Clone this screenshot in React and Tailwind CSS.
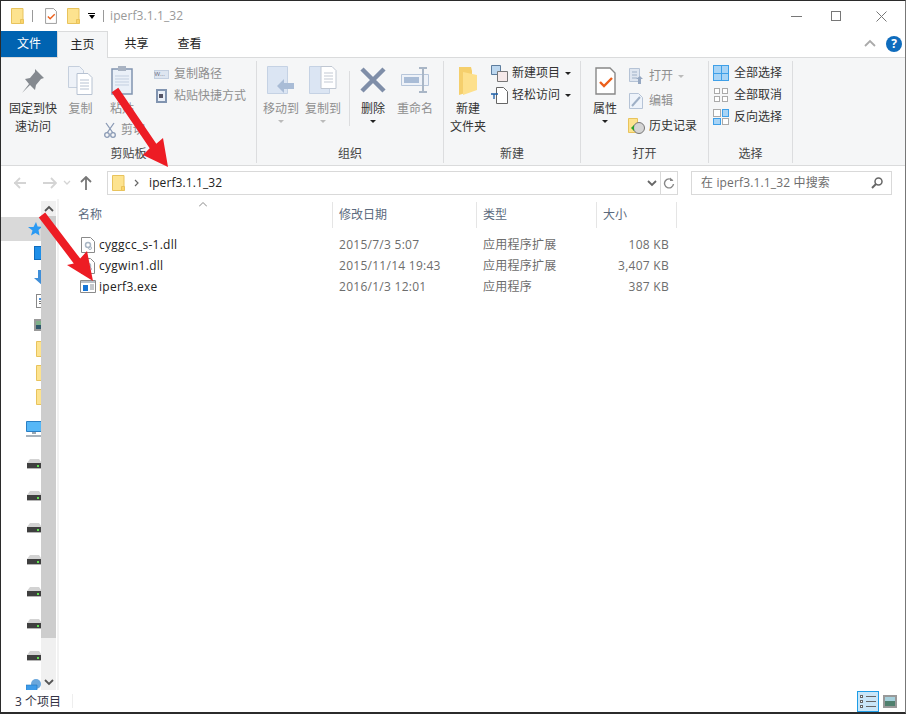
import React from "react"

const FONT = "font-['Open_Sans','Noto_Sans_CJK_SC',sans-serif]"

const Folder = ({ className = "" }) => (
  <svg viewBox="0 0 13 16" width="13" height="16" className={`shrink-0 ${className}`}>
    <path d="M.5.5h11.500v15H.5z" fill="#fde38f" stroke="#e8c35c" />
    <path d="M9.500 11.500h3v4h-3z" fill="#fbd46a" stroke="#e8c35c" />
  </svg>
)

const PropsIcon = ({ w = 14, h = 16 }) => (
  <svg viewBox="0 0 21 28" width={w} height={h}>
    <path d="M1 1h14l5 5v21H1z" fill="#fff" stroke="#888" strokeWidth="1.400" />
    <path d="M5 15l4 4 8-8" fill="none" stroke="#ec5f1a" strokeWidth="2.400" />
  </svg>
)

const Drive = () => (
  <svg viewBox="0 0 15 10" width="15" height="10">
    <path d="M3 0h9l3 4H0z" fill="#d3d3d3" />
    <path d="M0 4h15v5H0z" fill="#3f3f3f" />
    <path d="M0 9h15v1H0z" fill="#b5b5b5" />
    <path d="M10 6h2v2h-2z" fill="#5fe04f" />
  </svg>
)

const NavIcon = ({ type }) => {
  if (type === "star") return <svg viewBox="0 0 14 14" width="14" height="14" className="ml-[27px] shrink-0"><path d="M8 0l1.600 4.400L14 5l-3.500 3 1 5.500-4-2.500L3 13.500l1.500-5L0 5l5.500 0z" fill="#2b9af3" /></svg>
  if (type === "blue") return <div className="ml-[33px] w-[12px] h-[14px] shrink-0 bg-[#1f8fe8] border border-[#0f6cbd]" />
  if (type === "down") return <svg viewBox="0 0 16 15" width="16" height="15" className="ml-[33px] shrink-0"><path d="M4 0h5v8h7l-8 7-8-7h4z" fill="#3f8ed8" /></svg>
  if (type === "doc") return <div className="ml-[35px] w-[12px] h-[14px] shrink-0 bg-white border border-[#888]"><div className="mt-[3px] ml-[2px] w-[8px] h-[2px] bg-[#4a90d9]" /><div className="mt-[1px] ml-[2px] w-[8px] h-px bg-[#777]" /><div className="mt-[1px] ml-[2px] w-[8px] h-px bg-[#777]" /></div>
  if (type === "img") return <div className="ml-[33px] w-[14px] h-[12px] shrink-0 bg-white border-2 border-[#999] overflow-hidden"><div className="w-full h-1/2 bg-[#7fb08a]" /><div className="w-full h-1/2 bg-[#30586b]" /></div>
  if (type === "folder") return <Folder className="ml-[35px]" />
  if (type === "pc") return (
    <svg viewBox="0 0 16 16" width="16" height="16" className="ml-[25px] shrink-0">
      <path d="M.5.500h15v10H.5z" fill="#56b7f7" stroke="#2a7fc4" />
      <path d="M6 11h4v2H6z" fill="#9aa8b3" />
      <path d="M0 14h16v2H0z" fill="#a7b2bc" />
    </svg>
  )
  if (type === "drive") return <div className="ml-[26px] shrink-0"><Drive /></div>
  return (
    <svg viewBox="0 0 16 14" width="16" height="14" className="ml-[25px] shrink-0">
      <circle cx="10" cy="5" r="5" fill="#6aa7dc" />
      <path d="M0 6h11v8H0z" fill="#3d9be9" stroke="#2277bd" strokeWidth=".6" />
    </svg>
  )
}

const navRows = [
  ["star", 23], ["blue", 25], ["down", 24], ["doc", 23], ["img", 25], ["folder", 24], ["folder", 24], ["folder", 24],
  ["pc", 39], ["drive", 32], ["drive", 32], ["drive", 32], ["drive", 32], ["drive", 32], ["drive", 32], ["drive", 32], ["net", 27],
]

const files = [
  { name: "cyggcc_s-1.dll", date: "2015/7/3 5:07", type: "应用程序扩展", size: "108 KB", exe: false },
  { name: "cygwin1.dll", date: "2015/11/14 19:43", type: "应用程序扩展", size: "3,407 KB", exe: false },
  { name: "iperf3.exe", date: "2016/1/3 12:01", type: "应用程序", size: "387 KB", exe: true },
]

const DllIcon = () => (
  <svg viewBox="0 0 14 16" width="14" height="16">
    <path d="M.5.500h9l4 4v11H.5z" fill="#fff" stroke="#8a8a8a" />
    <circle cx="7" cy="8" r="2.500" fill="none" stroke="#a9b6c4" strokeWidth="1.500" />
    <circle cx="9" cy="11" r="1.500" fill="none" stroke="#a9b6c4" />
  </svg>
)

const ExeIcon = () => (
  <svg viewBox="0 0 16 13" width="16" height="13">
    <path d="M.5.500h15v12H.5z" fill="#fff" stroke="#8a8a8a" />
    <path d="M1 1h14v2H1z" fill="#b9c0c8" />
    <path d="M3 5h5v6H3z" fill="#1675d6" />
    <path d="M10 5h4M10 7h4M10 9h4" stroke="#8a9099" />
  </svg>
)

const BigButton = ({ w, icon, lines, muted, caret, caretMuted, pb = 5 }) => (
  <div className="flex flex-col items-center shrink-0" style={{ width: w }}>
    <div className="flex items-end justify-center h-[39px]" style={{ paddingBottom: pb }}>{icon}</div>
    {lines.map((l) => (
      <div key={l} className={`h-[18px] leading-[18px] whitespace-nowrap ${muted ? "text-[#8f8f8f]" : "text-[#333]"}`}>{l}</div>
    ))}
    {caret && <div className={`mt-[2px] w-0 h-0 border-x-[3px] border-x-transparent border-t-[3px] ${caretMuted ? "border-t-[#bbb]" : "border-t-[#222]"}`} />}
  </div>
)

const SmallButton = ({ icon, label, muted, caret, caretMuted }) => (
  <div className="flex items-center h-[22px] whitespace-nowrap">
    <div className="w-[18px] h-[18px] mr-[4px] flex items-center justify-center shrink-0">{icon}</div>
    <span className={muted ? "text-[#8f8f8f]" : "text-[#333]"}>{label}</span>
    {caret && <span className={`ml-[5px] w-0 h-0 border-x-[3px] border-x-transparent border-t-[3px] ${caretMuted ? "border-t-[#bbb]" : "border-t-[#222]"}`} />}
  </div>
)

const Group = ({ w, label, children }) => (
  <div className="flex flex-col h-[102px] border-r border-[#dcdddf] shrink-0" style={{ width: w }}>
    <div className="flex-1 flex items-start">{children}</div>
    <div className="h-[20px] leading-[22px] text-center text-[#444]">{label}</div>
  </div>
)

const MoveIcon = ({ copy }) => (
  <svg viewBox="0 0 28 29" width="28" height="29">
    <path d="M.5.500h20v27H.5z" fill="#dbe5f3" stroke="#c5d2e4" />
    {copy && <path d="M12 .5h11l4 4v18H12z" fill="#fff" stroke="#c0c7d2" />}
    {copy && <path d="M15 7h9M15 10h9M15 13h9M15 16h9" stroke="#c3c9d3" />}
    {!copy && <path d="M10 20l7-7v4h10v6H17v4z" fill="#a9bcd6" />}
  </svg>
)

const Chev = ({ d, c = "#888" }) => (
  <svg viewBox="0 0 12 12" width="12" height="12"><path d={d} fill="none" stroke={c} strokeWidth="1.800" /></svg>
)

export default function App() {
  return (
    <div className={`relative w-[906px] h-[714px] overflow-hidden bg-white text-[12px] border-l border-t border-b-2 border-[#2b2b2b] border-r border-r-[#777] ${FONT}`}>
      {/* title bar */}
      <div className="flex items-center h-[30px] pl-[10px]">
        <Folder />
        <div className="ml-[8px] w-px h-[12px] bg-[#999]" />
        <div className="ml-[11px] flex"><PropsIcon /></div>
        <Folder className="ml-[9px]" />
        <div className="ml-[8px] flex flex-col items-center gap-[1px]">
          <div className="w-[7px] h-px bg-black" />
          <div className="w-0 h-0 border-x-[3.500px] border-x-transparent border-t-[4px] border-t-black" />
        </div>
        <div className="ml-[8px] w-px h-[12px] bg-[#999]" />
        <span className="ml-[6px] text-[#999] text-[12px] tracking-[.1px]">iperf3.1.1_32</span>
        <div className="ml-auto flex items-center">
          <div className="w-[11px] h-px bg-[#777]" />
          <div className="ml-[29px] w-[10px] h-[10px] border border-[#777]" />
          <svg viewBox="0 0 11 11" width="11" height="11" className="ml-[35px] mr-[18px]"><path d="M.5.500l10 10M10.500.500l-10 10" stroke="#777" /></svg>
        </div>
      </div>

      {/* tabs */}
      <div className="flex items-end h-[26px]">
        <div className="w-[56px] h-[26px] leading-[25px] bg-[#0063b1] text-white text-center">文件</div>
        <div className="w-[51px] h-[27px] leading-[25px] bg-[#f5f6f7] border-x border-t border-[#dadbdc] text-center text-[#222] -mb-px relative">主页</div>
        <div className="ml-[2px] w-[53px] h-[26px] leading-[25px] text-center text-[#222]">共享</div>
        <div className="w-[53px] h-[26px] leading-[25px] text-center text-[#222]">查看</div>
        <div className="ml-auto flex items-center h-[26px] pr-[3px]">
          <Chev d="M1 8l5-5 5 5" c="#aaa" />
          <div className="ml-[10px] w-[16px] h-[16px] rounded-full bg-[#0f6cbd] text-white font-bold text-[12px] leading-[16px] text-center">?</div>
        </div>
      </div>

      {/* ribbon */}
      <div className="flex h-[109px] pt-[3px] bg-[#f5f6f7] border-y border-[#dadbdc] text-[12px]">
        <Group w={256} label="剪贴板">
          <BigButton w={64} lines={["固定到快", "速访问"]} pb={7} icon={
            <svg viewBox="0 0 22 24" width="22" height="24"><path d="M13 0l9 9-3 1-5 6-1 5-5-5-8 8 7-9-4-5 5-1 5-6z" fill="#858a90" /></svg>
          } />
          <BigButton w={31} lines={["复制"]} muted icon={
            <svg viewBox="0 0 25 29" width="25" height="29"><path d="M.5.500h11l4 4v17H.5z" fill="#eef2f8" stroke="#c5cfdd" /><path d="M9 7.500h11l4 4v17H9z" fill="#fff" stroke="#b7c2d2" /><path d="M12 14h9M12 17h9M12 20h9M12 23h9" stroke="#b7c2d2" /></svg>
          } />
          <div className="relative shrink-0 w-[52px]">
            <BigButton w={52} lines={["粘贴"]} muted icon={
              <svg viewBox="0 0 22 30" width="22" height="30"><path d="M1 4h20v25H1z" fill="#eaf0f8" stroke="#8194b0" strokeWidth="1.500" /><path d="M7 1h8v5H7z" fill="#a9b3c2" /><path d="M4 11h14M4 14h14M4 17h14M4 20h14" stroke="#c3cfe0" /></svg>
            } />
            {/* 剪切 sits under 粘贴 */}
            <div className="flex items-center mt-[3px] ml-[8px] whitespace-nowrap text-[#8f8f8f]">
              <svg viewBox="0 0 12 16" width="12" height="16" className="mr-[5px] shrink-0"><path d="M2 1l7 10M10 1L3 11" stroke="#8a9ab5" strokeWidth="1.300" /><circle cx="3" cy="13" r="2.300" fill="none" stroke="#8a9ab5" strokeWidth="1.300" /><circle cx="9" cy="13" r="2.300" fill="none" stroke="#8a9ab5" strokeWidth="1.300" /></svg>
              剪切
            </div>
          </div>
          <div className="pl-[4px] pt-[2px]">
            <SmallButton muted label="复制路径" icon={<div className="w-[15px] h-[9px] bg-[#dde5f0] border border-[#c3cfe0] text-[6px] leading-[6px] text-[#667]">W...</div>} />
            <SmallButton muted label="粘贴快捷方式" icon={<div className="w-[11px] h-[14px] bg-[#eaf0f8] border-2 border-[#8194b0] flex items-center justify-center"><div className="w-[4px] h-[4px] bg-[#556]" /></div>} />
          </div>
        </Group>
        <Group w={187} label="组织">
          <BigButton w={48} lines={["移动到"]} muted caret caretMuted icon={<MoveIcon />} />
          <BigButton w={36} lines={["复制到"]} muted caret caretMuted icon={<MoveIcon copy />} />
          <div className="w-px h-[55px] mt-[10px] ml-[8px] bg-[#dcdddf] shrink-0" />
          <BigButton w={46} lines={["删除"]} caret pb={7} icon={
            <svg viewBox="0 0 26 26" width="26" height="26"><path d="M2 2l22 22M24 2L2 24" stroke="#7f8ea8" strokeWidth="4.500" /></svg>
          } />
          <BigButton w={38} lines={["重命名"]} muted pb={7} icon={
            <svg viewBox="0 0 28 26" width="28" height="26"><path d="M.5 7.500h27v11H.5z" fill="#eef2f8" stroke="#b7c6da" /><path d="M3 10h15v6H3z" fill="#a9bcd6" /><path d="M18 1h8M22 1v24M18 25h8" stroke="#a9b6c6" strokeWidth="2" /></svg>
          } />
        </Group>
        <Group w={137} label="新建">
          <BigButton w={48} lines={["新建", "文件夹"]} icon={
            <svg viewBox="0 0 18 28" width="18" height="28"><path d="M0 0h12l1 4v20L0 28z" fill="#f5cf6c" /><path d="M4 5l14 3v15l-14 5z" fill="#fde08c" /></svg>
          } />
          <div className="-ml-[2px] pt-[1px]">
            <SmallButton label="新建项目" caret icon={<svg viewBox="0 0 17 17" width="17" height="17"><path d="M.5.500h9v9h-9z" fill="#bcd7ef" stroke="#5d7d9e" /><path d="M6.500 6.500h10v10h-10z" fill="#f5e9e9" stroke="#777" /></svg>} />
            <SmallButton label="轻松访问" caret icon={<svg viewBox="0 0 17 17" width="17" height="17"><path d="M5.500.500h7l4 4v12h-11z" fill="#fff" stroke="#666" /><path d="M0 7h7M3 7v5" stroke="#1d5fa8" strokeWidth="1.300" /></svg>} />
          </div>
        </Group>
        <Group w={128} label="打开">
          <BigButton w={48} lines={["属性"]} caret icon={<PropsIcon w={21} h={28} />} />
          <div className="-ml-[2px] pt-[4px] flex flex-col gap-[3px]">
            <SmallButton muted label="打开" caret caretMuted icon={<svg viewBox="0 0 14 16" width="14" height="16"><path d="M.5.500h10v13H.5z" fill="#dfe6f0" stroke="#b5c3d6" /><path d="M3 4h5M3 7h5M3 10h5" stroke="#9fb0c6" /><path d="M11 8l3 3h-2v5h-3v-5H7z" fill="#96a8c2" /></svg>} />
            <SmallButton muted label="编辑" icon={<svg viewBox="0 0 14 16" width="14" height="16"><path d="M.5.500h9l4 4v11H.5z" fill="#eef3fa" stroke="#b5c3d6" /><path d="M3 13L11 4" stroke="#9fb0c6" strokeWidth="2" /></svg>} />
            <SmallButton label="历史记录" icon={<svg viewBox="0 0 17 16" width="17" height="16"><path d="M.5.500h9v14H.5z" fill="#fde38f" stroke="#e8c35c" /><circle cx="11" cy="10" r="5.500" fill="#d5d5d5" stroke="#777" /><path d="M3 10l3-3v6z" fill="#2ca02c" /></svg>} />
          </div>
        </Group>
        <Group w={84} label="选择">
          <div className="pl-[3px] pt-[1px] flex flex-col">
            <SmallButton label="全部选择" icon={<div className="grid grid-cols-2 gap-[1px] w-[16px] h-[16px] bg-[#3fa0e8] p-px">{[0, 1, 2, 3].map((i) => <div key={i} className="bg-[#a8d4f6]" />)}</div>} />
            <SmallButton label="全部取消" icon={<div className="grid grid-cols-2 gap-[2px] w-[14px] h-[14px]">{[0, 1, 2, 3].map((i) => <div key={i} className="border border-[#aaa] bg-white" />)}</div>} />
            <SmallButton label="反向选择" icon={<div className="grid grid-cols-2 gap-[1px] w-[16px] h-[16px]">{[0, 1, 2, 3].map((i) => <div key={i} className={i === 1 || i === 2 ? "border border-[#3fa0e8] bg-[#a8d4f6]" : "border border-[#aaa] bg-white"} />)}</div>} />
          </div>
        </Group>
      </div>

      {/* address bar */}
      <div className="flex items-center h-[33px]">
        <div className="flex items-center w-[106px] shrink-0 pl-[13px]">
          <svg viewBox="0 0 14 12" width="14" height="12"><path d="M0 6h12M6 1L1 6l5 5" fill="none" stroke="#d4d4d4" strokeWidth="1.800" /></svg>
          <svg viewBox="0 0 14 12" width="14" height="12" className="ml-[15px]"><path d="M0 6h12M8 1l5 5-5 5" fill="none" stroke="#d4d4d4" strokeWidth="1.800" /></svg>
          <svg viewBox="0 0 8 6" width="8" height="6" className="ml-[6px]"><path d="M1 1l3 3 3-3" fill="none" stroke="#d4d4d4" strokeWidth="1.300" /></svg>
          <svg viewBox="0 0 12 14" width="12" height="14" className="ml-[9px]"><path d="M6 14V2M1 6l5-5 5 5" fill="none" stroke="#777" strokeWidth="1.800" /></svg>
        </div>
        <div className="flex items-center w-[571px] h-[24px] border border-[#d9d9d9] shrink-0">
          <Folder className="ml-[4px]" />
          <svg viewBox="0 0 5 8" width="5" height="8" className="ml-[9px]"><path d="M1 1l3 3-3 3" fill="none" stroke="#666" strokeWidth="1.200" /></svg>
          <span className="ml-[10px] text-[#222] tracking-[.1px]">iperf3.1.1_32</span>
          <div className="ml-auto pr-[2px] flex"><Chev d="M2 4l4 4 4-4" c="#666" /></div>
          <div className="w-[17px] h-full border-l border-[#d9d9d9] flex items-center justify-center">
            <svg viewBox="0 0 12 12" width="12" height="12"><path d="M9.500 3.500A4.500 4.500 0 1 0 10.500 7" fill="none" stroke="#888" strokeWidth="1.400" /><path d="M7 .5l3.500 3.500H7z" fill="#888" /></svg>
          </div>
        </div>
        <div className="flex items-center w-[201px] h-[24px] ml-[13px] pl-[9px] pr-[8px] border border-[#d9d9d9] text-[#6d6d6d] shrink-0">
          <span className="tracking-[.15px]">在 iperf3.1.1_32 中搜索</span>
          <svg viewBox="0 0 12 12" width="12" height="12" className="ml-auto"><circle cx="7.500" cy="4.500" r="3.500" fill="none" stroke="#666" strokeWidth="1.500" /><path d="M5 7l-4 4" stroke="#666" strokeWidth="2" /></svg>
        </div>
      </div>

      {/* body */}
      <div className="flex h-[491px]">
        <div className="relative w-[40px] pt-[18px] overflow-hidden shrink-0">
          <div className="absolute left-0 top-[18px] w-full h-[24px] bg-[#d9d9d9]" />
          {navRows.map(([type, h], i) => (
            <div key={i} className="relative flex items-center" style={{ height: h }}><NavIcon type={type} /></div>
          ))}
        </div>
        <div className="flex flex-col w-[15px] mt-[2px] bg-[#f0f0f0] shrink-0">
          <div className="h-[15px] flex items-center justify-center"><Chev d="M2 8l4-4 4 4" c="#555" /></div>
          <div className="h-[422px] bg-[#cdcdcd]" />
          <div className="flex-1 flex items-end justify-center pb-[2px]"><Chev d="M2 4l4 4 4-4" c="#555" /></div>
        </div>
        <div className="w-[2px] ml-[1px] bg-[#f2f2f2] shrink-0" />
        <div className="relative flex-1 pl-[18px] pt-[3px]">
          <svg viewBox="0 0 8 5" width="8" height="5" className="absolute left-[140px] top-[3px]"><path d="M0 4.500l4-4 4 4" fill="none" stroke="#888" /></svg>
          <div className="flex h-[26px] items-center text-[#5b6a7d]">
            <div className="w-[256px] h-full pl-[1px] flex items-center border-r border-[#e5e5e5]">名称</div>
            <div className="w-[144px] h-full pl-[6px] flex items-center border-r border-[#e5e5e5]">修改日期</div>
            <div className="w-[120px] h-full pl-[6px] flex items-center border-r border-[#e5e5e5]">类型</div>
            <div className="w-[80px] h-full pl-[6px] flex items-center border-r border-[#e5e5e5]">大小</div>
          </div>
          <div className="pt-[6px] tracking-[.27px]">
            {files.map((f) => (
              <div key={f.name} className="flex items-center h-[21px] text-[#6d6d6d]">
                <div className="w-[256px] flex items-center text-[#222]">
                  <div className="w-[17px] ml-[2px] mr-[3px] flex justify-center shrink-0">{f.exe ? <ExeIcon /> : <DllIcon />}</div>
                  {f.name}
                </div>
                <div className="w-[144px] pl-[6px]">{f.date}</div>
                <div className="w-[120px] pl-[6px]">{f.type}</div>
                <div className="w-[72px] text-right">{f.size}</div>
              </div>
            ))}
          </div>
        </div>
      </div>

      {/* status bar */}
      <div className="flex items-center h-[22px] pl-[14px] text-[#334]">
        <span className="mt-[1px]">3 个项目</span>
        <div className="ml-[11px] w-px h-[14px] bg-[#eee]" />
        <div className="ml-auto w-[22px] h-[21px] border border-[#1e9de7] bg-[#c9e6f8] flex flex-col items-center justify-center gap-[2px]">
          {[0, 1, 2].map((i) => (
            <div key={i} className="flex items-center gap-[3px]">
              <div className="w-[3px] h-[3px] bg-white border-[0.5px] border-[#666]" />
              <div className="w-[10px] h-px bg-[#666]" />
            </div>
          ))}
        </div>
        <div className="ml-[4px] mr-[8px] w-[14px] h-[13px] border-2 border-[#999] overflow-hidden">
          <div className="h-1/2 bg-[#a5d0dc]" />
          <div className="h-1/2 bg-[#4f7f6d]" />
        </div>
      </div>

      {/* red annotation arrows */}
      <svg className="absolute left-[-1px] top-[-1px] pointer-events-none" width="906" height="714" viewBox="0 0 906 714">
        <path d="M111.700 92.300L118.300 87.700L156.300 143.700L163 138L168 167L143 155L149.700 148.300z" fill="#ed1c24" />
        <path d="M38.800 217.400L45.200 212.600L80.200 258.600L87 251L93 281L67 265L73.800 263.400z" fill="#ed1c24" />
      </svg>
    </div>
  )
}
